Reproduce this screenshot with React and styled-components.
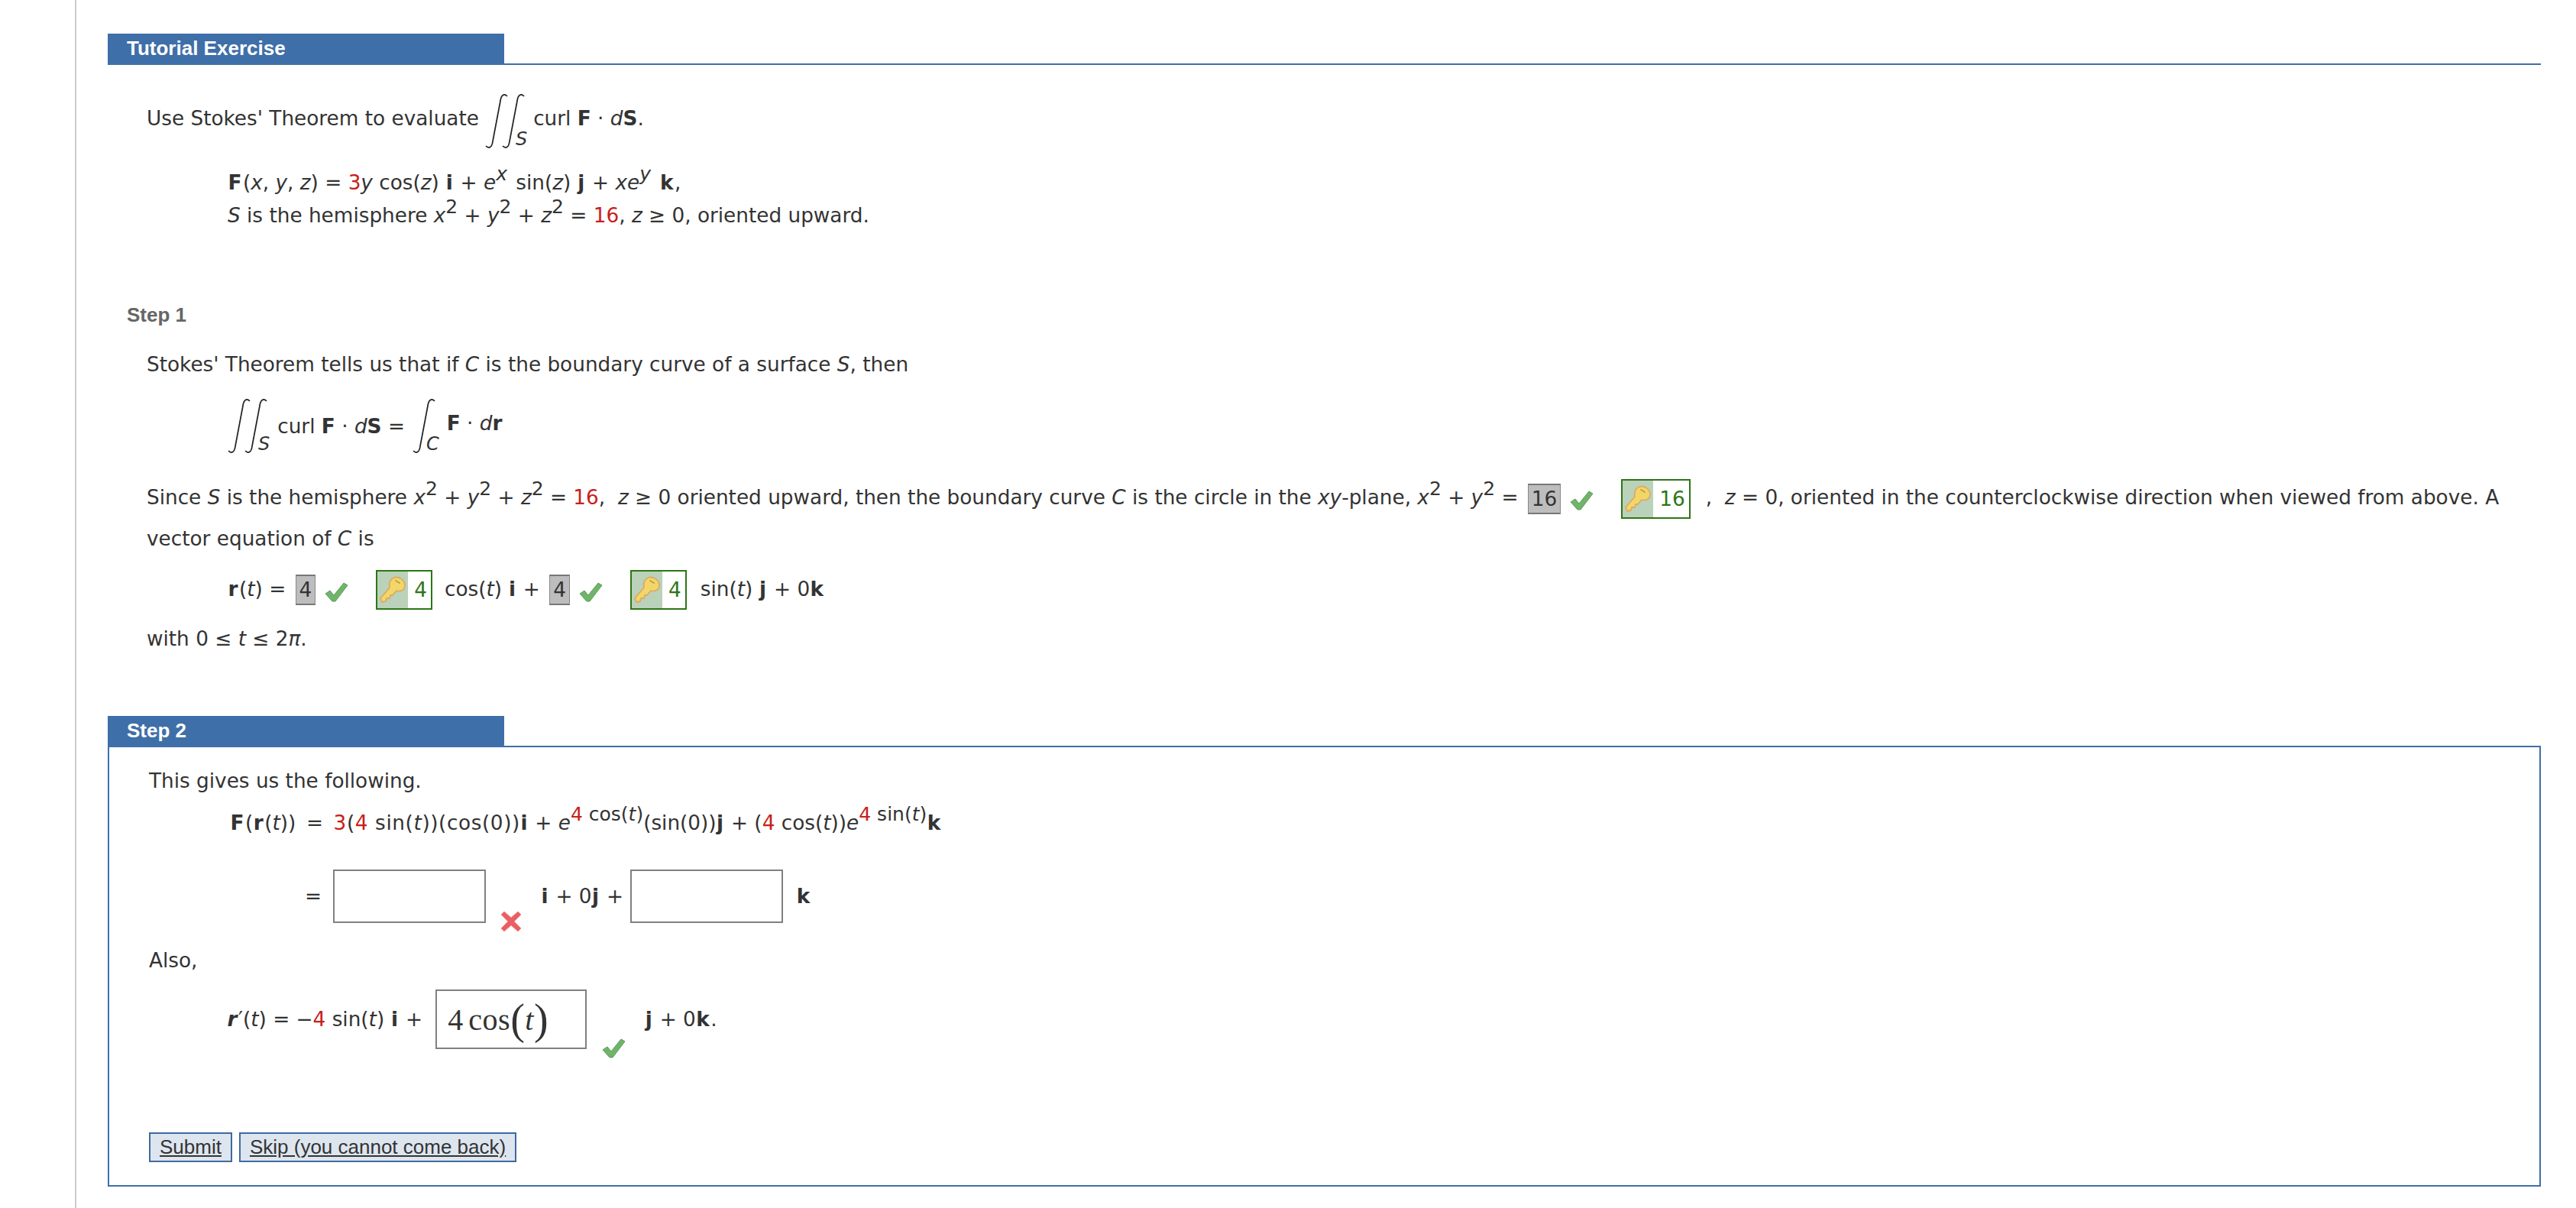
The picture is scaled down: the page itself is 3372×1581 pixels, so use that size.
import styled, { createGlobalStyle } from "styled-components"

const BLUE = "#3f6fa8"

const GlobalStyle = createGlobalStyle`
    html, body {
        margin: 0;
        padding: 0;
        background: #fff;
    }
    body {
        font-family: "DejaVu Sans", Verdana, sans-serif;
        font-size: 26.3px;
        color: #333;
    }
`

const Page = styled.div`
    box-sizing: border-box;
    min-height: 1581px;
    margin-left: 98px;
    border-left: 2px solid #ccc;
    padding: 44px 0 0 41px;
`

const Content = styled.div`
    width: 3185px;
`

const HeadingRow = styled.div`
    height: 39px;
    margin-top: ${(p) => p.$top || 0}px;
    border-bottom: 2px solid ${BLUE};
`

const HeadingTab = styled.h2`
    box-sizing: border-box;
    margin: 0;
    width: 519px;
    height: 41px;
    padding-left: 25px;
    background: ${BLUE};
    color: #fff;
    font: bold 26px/38px "Liberation Sans", Arial, sans-serif;
`

const Intro = styled.div`
    padding: 37px 0 0 51px;
`

const IntegralLine = styled.div`
    display: flex;
    align-items: center;
    height: 73px;
    gap: ${(p) => p.$gap || 10}px;
    margin-top: ${(p) => p.$top || 0}px;
    padding-left: ${(p) => p.$indent || 0}px;
`

const RaiseText = styled.span`
    padding-bottom: ${(p) => p.$up || 0}px;
`

const Statement = styled.div`
    margin: ${(p) => p.$top || 0}px 0 0 ${(p) => p.$left || 0}px;
    line-height: ${(p) => p.$line || 43}px;
    white-space: ${(p) => (p.$wrap ? "normal" : "nowrap")};
`

const StepLabel = styled.h3`
    margin: 90px 0 0 25px;
    color: #666;
    font: bold 26px/36px "Liberation Sans", Arial, sans-serif;
`

const StepBody = styled.div`
    padding-left: 51px;
`

const Bold = styled.b`
    margin: 0 0.5px;
    letter-spacing: 1px;
`

const Sup = styled.sup`
    font-size: ${(p) => p.$size || 25}px;
    line-height: 0;
    vertical-align: ${(p) => p.$raise || 12}px;
    margin-right: ${(p) => p.$after || 0}px;
`

const Red = styled.span`
    color: #c8201a;
`

const WideRun = styled.span`
    letter-spacing: 0.6px;
`

const Given = styled.span`
    display: inline-block;
    box-sizing: border-box;
    height: 40px;
    padding: 0 4px;
    margin: 0 0 0 4px;
    background: #bdbdbd;
    border-top: 2px solid #777;
    border-bottom: 2px solid #777;
    border-left: 1px solid #888;
    border-right: 1px solid #888;
    line-height: 36px;
    vertical-align: middle;
`

const Mark = styled.svg`
    display: inline-block;
    vertical-align: -8px;
    margin-left: ${(p) => p.$left || 12}px;
    margin-top: ${(p) => p.$top || 0}px;
    align-self: flex-start;
    flex: none;
`

const KeyBox = styled.span`
    display: inline-flex;
    box-sizing: border-box;
    height: 52px;
    margin: 0 ${(p) => p.$after || 0}px 0 36px;
    border: 2px solid #2d7517;
    vertical-align: middle;
    color: #2d7517;
`

const KeySwatch = styled.span`
    display: flex;
    align-items: center;
    justify-content: center;
    width: 40px;
    background: #bad2b9;
`

const KeyValue = styled.span`
    padding: 0 5px 0 8px;
    line-height: 48px;
`

const FormulaRow = styled.div`
    display: flex;
    align-items: center;
    height: ${(p) => p.$height}px;
    margin: ${(p) => p.$top || 0}px 0 0 ${(p) => p.$left || 0}px;
    white-space: pre;
`

const RowText = styled.span`
    margin: 0 ${(p) => p.$right || 0}px 0 ${(p) => p.$lead || 0}px;
`

const Box = styled.div`
    box-sizing: border-box;
    height: 575px;
    border: 2px solid ${BLUE};
    border-top: 0;
    padding: 26px 0 0 52px;
`

const AnswerInput = styled.input`
    box-sizing: border-box;
    width: 200px;
    height: 70px;
    margin: 0;
    border: 2px solid #808080;
    background: #fff;
`

const FilledInput = styled.div`
    box-sizing: border-box;
    display: flex;
    align-items: center;
    width: 198px;
    height: 78px;
    padding-left: 14px;
    border: 2px solid #808080;
    color: #333;
    font: 40px "Liberation Serif", "Times New Roman", serif;
    letter-spacing: 0.5px;
    word-spacing: -4px;
    white-space: pre;
`

const BigParen = styled.span`
    font-size: 56px;
    font-weight: 200;
    line-height: 56px;
`

const ButtonRow = styled.div`
    display: flex;
    gap: 9px;
    margin-top: 109px;
`

const LinkButton = styled.button`
    box-sizing: border-box;
    height: 39px;
    padding: 0 12px;
    background: #dde5ef;
    border: 2px solid #3f6a9e;
    color: #333;
    font: 26px/33px "Liberation Sans", Arial, sans-serif;
    text-decoration: underline;
`

const IntegralWrap = styled.span`
    display: inline-flex;
    align-items: flex-end;
    flex: none;
    height: 73px;
`

const IntegralSub = styled.i`
    font-size: 24px;
    line-height: 26px;
    margin-left: -12px;
`

const Integral = ({ count, sub }) => (
    <IntegralWrap>
        <svg width={count === 2 ? 52 : 30} height="73" viewBox={`0 0 ${count === 2 ? 52 : 30} 73`}>
            {[...Array(count).keys()].map((n) => (
                <path
                    key={n}
                    transform={`translate(${n * 22} 0)`}
                    d="M29 4C25 0 21 2 20 10L10 63C9 71 5 73 1 69"
                    fill="none"
                    stroke="#222"
                    strokeWidth="1.7"
                />
            ))}
        </svg>
        <IntegralSub>{sub}</IntegralSub>
    </IntegralWrap>
)

const Check = ({ left, top }) => (
    <Mark $left={left} $top={top} width="31" height="26" viewBox="0 0 31 26">
        <path d="M1 15L7 11L12 17L25 1L30 4L14 25H10Z" fill="#72b36b" stroke="#5a9f58" strokeWidth="1" strokeLinejoin="round" />
    </Mark>
)

const Cross = () => (
    <Mark $left={19} $top={54} width="28" height="28" viewBox="0 0 28 28">
        <path d="M5 1L14 9L23 1L27 5L18 14L27 23L23 27L14 19L5 27L1 23L10 14L1 5Z" fill="#e95f62" stroke="#ee8c8d" strokeWidth="1" strokeLinejoin="round" />
    </Mark>
)

const KeyIcon = () => (
    <svg width="34" height="36" viewBox="0 0 34 36">
        <path
            d="M19 2C25 0 33 5 33 12C33 18 27 21 22 19L17 25L14 25L13 29L9 29L8 33L3 34L1 29L13 15C12 9 14 4 19 2Z"
            fill="#f2d768"
            stroke="#dcaa66"
            strokeWidth="1.8"
            strokeLinejoin="round"
        />
        <path d="M21 6L26 9" stroke="#c2a043" strokeWidth="2" strokeLinecap="round" />
    </svg>
)

const Answer = ({ value, after }) => (
    <KeyBox $after={after}>
        <KeySwatch><KeyIcon /></KeySwatch>
        <KeyValue>{value}</KeyValue>
    </KeyBox>
)

const App = () => (
    <>
        <GlobalStyle />
        <Page>
            <Content>
                <HeadingRow><HeadingTab>Tutorial Exercise</HeadingTab></HeadingRow>
                <Intro>
                    <IntegralLine $gap={8}>
                        <RaiseText $up={8}>Use Stokes' Theorem to evaluate</RaiseText>
                        <Integral count={2} sub="S" />
                        <RaiseText $up={8}>curl <b>F</b> · <i>d</i><b>S</b>.</RaiseText>
                    </IntegralLine>
                    <Statement $top={23} $left={106}>
                        <Bold>F</Bold>(<i>x</i>, <i>y</i>, <i>z</i>) = <Red>3</Red><i>y</i> cos(<i>z</i>) <Bold>i</Bold> + <i>e</i><Sup $after={3}><i>x</i></Sup> sin(<i>z</i>) <Bold>j</Bold> + <i>xe</i><Sup $after={3}><i>y</i></Sup> <Bold>k</Bold>,
                    </Statement>
                    <Statement $left={106}>
                        <i>S</i> is the hemisphere <i>x</i><Sup>2</Sup> + <i>y</i><Sup>2</Sup> + <i>z</i><Sup>2</Sup> = <Red>16</Red>, <i>z</i> ≥ 0, oriented upward.
                    </Statement>
                </Intro>

                <StepLabel>Step 1</StepLabel>
                <StepBody>
                    <Statement $top={29} $line={36}>
                        Stokes' Theorem tells us that if <i>C</i> is the boundary curve of a surface <i>S</i>, then
                    </Statement>
                    <IntegralLine $indent={106} $top={26}>
                        <Integral count={2} sub="S" />
                        <RaiseText>curl <b>F</b> · <i>d</i><b>S</b> =</RaiseText>
                        <Integral count={1} sub="C" />
                        <RaiseText $up={8}><b>F</b> · <i>d</i><b>r</b></RaiseText>
                    </IntegralLine>
                    <Statement $top={31} $line={52} $wrap>
                        Since <i>S</i> is the hemisphere <i>x</i><Sup>2</Sup> + <i>y</i><Sup>2</Sup> + <i>z</i><Sup>2</Sup> = <Red>16</Red>,&nbsp; <i>z</i> ≥ 0 oriented upward, then the boundary curve <i>C</i> is the circle in the <i>xy</i>-plane, <i>x</i><Sup>2</Sup> + <i>y</i><Sup>2</Sup> = <Given>16</Given><Check /><Answer value="16" after={20} />,&nbsp; <i>z</i> = 0, oriented in the counterclockwise direction when viewed from above. A vector equation of <i>C</i> is
                    </Statement>
                    <Statement $top={14} $left={106} $line={52}>
                        <Bold>r</Bold>(<i>t</i>) = <Given>4</Given><Check /><Answer value="4" after={16} />cos(<i>t</i>) <Bold>i</Bold> + <Given>4</Given><Check /><Answer value="4" after={18} />sin(<i>t</i>) <Bold>j</Bold> + 0<Bold>k</Bold>
                    </Statement>
                    <Statement $top={12} $line={52}>
                        with 0 ≤ <i>t</i> ≤ 2<i>π</i>.
                    </Statement>
                </StepBody>

                <HeadingRow $top={75}><HeadingTab>Step 2</HeadingTab></HeadingRow>
                <Box>
                    <Statement $line={36}>This gives us the following.</Statement>
                    <Statement $top={19} $left={106} $line={36}>
                        <Bold>F</Bold>(<Bold>r</Bold>(<i>t</i>)){"\u2009 "}={"\u2009 "}<WideRun><Red>3</Red>(<Red>4</Red> sin(<i>t</i>))(cos(0))</WideRun><Bold>i</Bold> + <i>e</i><Sup><Red>4</Red> cos(<i>t</i>)</Sup>(sin(0))<Bold>j</Bold> + (<Red>4</Red> cos(<i>t</i>))<i>e</i><Sup><Red>4</Red> sin(<i>t</i>)</Sup><Bold>k</Bold>
                    </Statement>
                    <FormulaRow $top={43} $left={204} $height={70}>
                        <RowText $right={15}>=</RowText>
                        <AnswerInput readOnly aria-label="i component" />
                        <Cross />
                        <RowText $lead={25} $right={1}><Bold>i</Bold> + 0<Bold>j</Bold> + </RowText>
                        <AnswerInput readOnly aria-label="k component" />
                        <RowText $lead={17}><Bold>k</Bold></RowText>
                    </FormulaRow>
                    <Statement $top={31} $line={36}>Also,</Statement>
                    <FormulaRow $top={20} $left={102} $height={78}>
                        <RowText $right={9}><Bold><i>r</i></Bold>′(<i>t</i>) = −<Red>4</Red> sin(<i>t</i>) <Bold>i</Bold> + </RowText>
                        <FilledInput>
                            4 cos<BigParen>(</BigParen><i>t</i><BigParen>)</BigParen>
                        </FilledInput>
                        <Check left={20} top={64} />
                        <RowText $lead={25}><Bold>j</Bold> + 0<Bold>k</Bold>.</RowText>
                    </FormulaRow>
                    <ButtonRow>
                        <LinkButton>Submit</LinkButton>
                        <LinkButton>Skip (you cannot come back)</LinkButton>
                    </ButtonRow>
                </Box>
            </Content>
        </Page>
    </>
)

export default App
